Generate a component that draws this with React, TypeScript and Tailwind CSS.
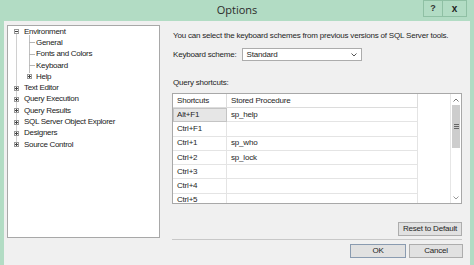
import React from "react";

const tree = [
  { label: "Environment", level: 0, box: "minus" },
  { label: "General", level: 1 },
  { label: "Fonts and Colors", level: 1 },
  { label: "Keyboard", level: 1 },
  { label: "Help", level: 1, box: "plus" },
  { label: "Text Editor", level: 0, box: "plus" },
  { label: "Query Execution", level: 0, box: "plus" },
  { label: "Query Results", level: 0, box: "plus" },
  { label: "SQL Server Object Explorer", level: 0, box: "plus" },
  { label: "Designers", level: 0, box: "plus" },
  { label: "Source Control", level: 0, box: "plus" },
];

const rows = [
  ["Alt+F1", "sp_help"],
  ["Ctrl+F1", ""],
  ["Ctrl+1", "sp_who"],
  ["Ctrl+2", "sp_lock"],
  ["Ctrl+3", ""],
  ["Ctrl+4", ""],
  ["Ctrl+5", ""],
];

function Expander({ kind }: { kind: string }) {
  return (
    <span className="relative w-[5px] h-[5px] border border-[#9a9a9a] bg-white flex items-center justify-center shrink-0">
      <span className="absolute w-[3px] h-px bg-[#444]" />
      {kind === "plus" && <span className="absolute w-px h-[3px] bg-[#444]" />}
    </span>
  );
}

function Tree() {
  return (
    <div className="ml-[3px] mt-[4px] w-[153px] h-[213px] bg-white border border-[#a8a8a8] pl-[6px] tracking-[-0.3px]">
      <div className="relative">
        {/* root line */}
        <div className="absolute left-[2px] top-[6px] h-[113px] w-px bg-[#d0d0d0]" />
        {/* vertical line under Environment */}
        <div className="absolute left-[15px] top-[9px] h-[38px] w-px bg-[#c0c0c0]" />
        {tree.map((t) => (
          <div key={t.label} className="relative h-[11.3px] flex items-center">
            {t.level === 1 && !t.box && (
              <>
                <span className="w-[15px] shrink-0" />
                <span className="w-[6px] h-px bg-[#b5b5b5] mr-[1px] shrink-0" />
              </>
            )}
            {t.level === 1 && t.box && (
              <>
                <span className="w-[13px] shrink-0" />
                <Expander kind={t.box} />
                <span className="w-[4px] shrink-0" />
              </>
            )}
            {t.level === 0 && (
              <>
                <Expander kind={t.box!} />
                <span className="w-[5px] shrink-0" />
              </>
            )}
            <span className="text-[#222] whitespace-nowrap">{t.label}</span>
          </div>
        ))}
      </div>
    </div>
  );
}

function Grid() {
  return (
    <div className="mt-[4px] h-[111px] border border-[#a8a8a8] bg-white flex overflow-hidden">
      <div className="flex-1 overflow-hidden">
        <div className="flex h-[14px] items-center">
          <div className="w-[54px] h-full border-r border-b border-[#dcdcdc] pl-[4px] flex items-center">Shortcuts</div>
          <div className="w-[191px] h-full border-r border-b border-[#dcdcdc] pl-[4px] flex items-center">Stored Procedure</div>
        </div>
        {rows.map(([k, v], i) => (
          <div key={k} className="flex h-[14.3px]">
            <div
              className={
                i === 0
                  ? "w-[54px] h-full border border-[#c4c4c4] bg-[#e6e6e6] pl-[3px] flex items-center"
                  : "w-[54px] h-full border-r border-b border-[#e4e4e4] pl-[4px] flex items-center"
              }
            >
              {k}
            </div>
            <div className="w-[191px] h-full border-r border-b border-[#e4e4e4] pl-[4px] flex items-center">{v}</div>
          </div>
        ))}
      </div>
      <div className="w-[11px] border-l border-[#e6e6e6] bg-white flex flex-col">
        <div className="h-[11px] flex items-center justify-center">
          <svg width="6" height="4" viewBox="0 0 6 4"><path d="M0.5 3.5 L3 1 L5.5 3.5" fill="none" stroke="#777" strokeWidth="1" /></svg>
        </div>
        <div className="h-[43px] mx-[1px] bg-[#cdcdcd] flex items-center justify-center">
          <div className="flex flex-col gap-[1px]">
            <span className="w-[5px] h-px bg-[#666]" />
            <span className="w-[5px] h-px bg-[#666]" />
            <span className="w-[5px] h-px bg-[#666]" />
          </div>
        </div>
        <div className="flex-1" />
        <div className="h-[10px] flex items-center justify-center">
          <svg width="6" height="4" viewBox="0 0 6 4"><path d="M0.5 0.5 L3 3 L5.5 0.5" fill="none" stroke="#999" strokeWidth="1" /></svg>
        </div>
      </div>
    </div>
  );
}

export default function App() {
  return (
    <div className="w-[474px] h-[265px] bg-[#b2dcc4] flex flex-col px-[4px] font-['Liberation_Sans',Arial,sans-serif] text-[8px] text-[#1e1e1e] overflow-hidden">
      {/* Title bar */}
      <div className="relative h-[21px] flex items-center justify-center">
        <span className="text-[11px] text-[#2b2b2b] font-['Open_Sans',sans-serif]">Options</span>
        <div className="absolute right-[3px] top-0 flex">
          <div className="w-[20px] h-[17px] border border-[#8fc0a4] flex items-center justify-center text-[9px] font-bold text-[#333]">?</div>
          <div className="w-[24px] h-[17px] border border-l-0 border-[#8fc0a4] flex items-center justify-center text-[10px] font-bold text-[#222]">x</div>
        </div>
      </div>

      {/* Body */}
      <div className="flex-1 bg-[#f0f0f0] flex">
        <Tree />
        <div className="ml-[12px] w-[290px] flex flex-col tracking-[-0.2px]">
          <div className="mt-[9px] pl-[1px] leading-[12px] whitespace-nowrap">
            You can select the keyboard schemes from previous versions of SQL Server tools.
          </div>
          <div className="mt-[6px] flex items-center pl-[1px]">
            <span>Keyboard scheme:</span>
            <div className="ml-[5px] w-[120px] h-[13px] bg-white border border-[#acacac] flex items-center pl-[4px] pr-[4px] justify-between">
              <span>Standard</span>
              <svg width="6" height="4" viewBox="0 0 6 4"><path d="M0.5 0.5 L3 3 L5.5 0.5" fill="none" stroke="#555" strokeWidth="1" /></svg>
            </div>
          </div>
          <div className="mt-[16px] pl-[1px] leading-[12px]">Query shortcuts:</div>
          <Grid />
          <div className="mt-[18px] flex justify-end">
            <div className="w-[64px] h-[14px] bg-[#e1e1e1] border border-[#adadad] flex items-center justify-center">Reset to Default</div>
          </div>
          <div className="mt-[3px] h-px bg-[#c8c8c8]" />
          <div className="mt-[4px] flex justify-end gap-[3px] -mr-[1px]">
            <div className="w-[56px] h-[14px] bg-[#e1e1e1] border border-[#8a9bb0] flex items-center justify-center">OK</div>
            <div className="w-[54px] h-[14px] bg-[#e1e1e1] border border-[#adadad] flex items-center justify-center">Cancel</div>
          </div>
        </div>
      </div>
    </div>
  );
}
